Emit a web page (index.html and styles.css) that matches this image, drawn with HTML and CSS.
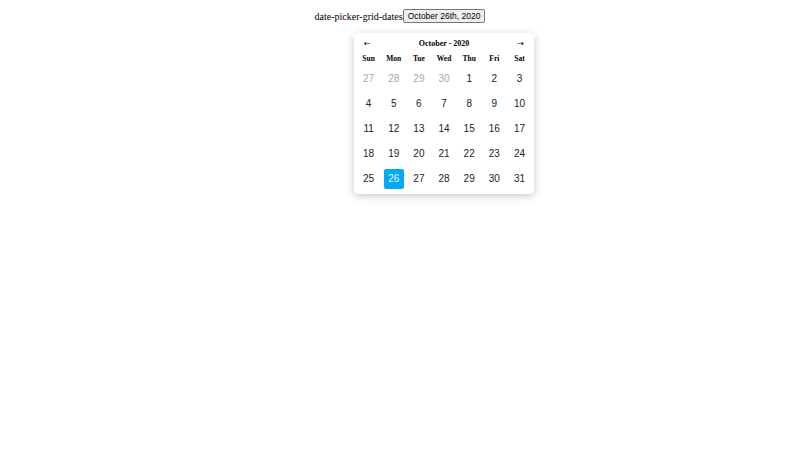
FILE: index.html
```html
<!DOCTYPE html>
<html>
<head>
<meta charset="utf-8">
<link rel="stylesheet" href="styles.css">
</head>
<body>
<div class="demo">
  <span class="label">date-picker-grid-dates</span>
  <div class="anchor">
    <button class="trigger">October 26th, 2020</button>
    <div class="calendar">
      <div class="cal-head">
        <span class="nav">←</span>
        <span class="month">October - 2020</span>
        <span class="nav">→</span>
      </div>
      <div class="grid">
        <div class="dow">Sun</div><div class="dow">Mon</div><div class="dow">Tue</div><div class="dow">Wed</div><div class="dow">Thu</div><div class="dow">Fri</div><div class="dow">Sat</div>
        <div class="day muted">27</div><div class="day muted">28</div><div class="day muted">29</div><div class="day muted">30</div><div class="day">1</div><div class="day">2</div><div class="day">3</div>
        <div class="day">4</div><div class="day">5</div><div class="day">6</div><div class="day">7</div><div class="day">8</div><div class="day">9</div><div class="day">10</div>
        <div class="day">11</div><div class="day">12</div><div class="day">13</div><div class="day">14</div><div class="day">15</div><div class="day">16</div><div class="day">17</div>
        <div class="day">18</div><div class="day">19</div><div class="day">20</div><div class="day">21</div><div class="day">22</div><div class="day">23</div><div class="day">24</div>
        <div class="day">25</div><div class="day"><span class="selected">26</span></div><div class="day">27</div><div class="day">28</div><div class="day">29</div><div class="day">30</div><div class="day">31</div>
      </div>
    </div>
  </div>
</div>
</body>
</html>
```
FILE: styles.css
```css
html {
  height: 100%;
}

body {
  margin: 8px;
  min-height: calc(100% - 16px);
  font-family: "Liberation Serif", serif;
  background: #fff;
  color: #000;
}

.demo {
  display: flex;
  justify-content: center;
  align-items: center;
  height: 16px;
}

.label {
  font-size: 10px;
}

.anchor {
  position: relative;
}

.trigger {
  display: block;
  font-family: "Liberation Sans", Arial, sans-serif;
  font-size: 8.5px;
  line-height: 10px;
  padding: 1px 4px;
  border: 1px solid #767676;
  border-radius: 2px;
  background: #efefef;
  color: #000;
}

/* dropdown panel, centred under the trigger */
.calendar {
  position: absolute;
  top: 24px;
  left: 50%;
  transform: translateX(-50%);
  width: 176px;
  padding: 0 2px 3px;
  background: #fff;
  border-radius: 4px;
  box-shadow: 0 2px 8px rgba(0, 0, 0, 0.22);
  text-align: center;
  z-index: 1;
}

.cal-head {
  display: flex;
  justify-content: space-between;
  align-items: center;
  height: 20px;
  padding: 0 8px;
  font-size: 8px;
}

.month {
  font-weight: bold;
}

.nav {
  font-family: "DejaVu Sans", sans-serif;
  font-size: 8px;
}

.grid {
  display: grid;
  grid-template-columns: repeat(7, 1fr);
  grid-template-rows: 13px;
  grid-auto-rows: 25px;
}

.dow {
  font-size: 7.5px;
  font-weight: bold;
  line-height: 11px;
}

.day {
  display: flex;
  align-items: center;
  justify-content: center;
  font-family: "Liberation Sans", Arial, sans-serif;
  font-size: 10px;
  color: #222;
}

.muted {
  color: #a8a8a8;
}

.selected {
  display: flex;
  align-items: center;
  justify-content: center;
  width: 20px;
  height: 20px;
  border-radius: 2px;
  background: #03a9f4;
  color: #e8f6ff;
}
```
